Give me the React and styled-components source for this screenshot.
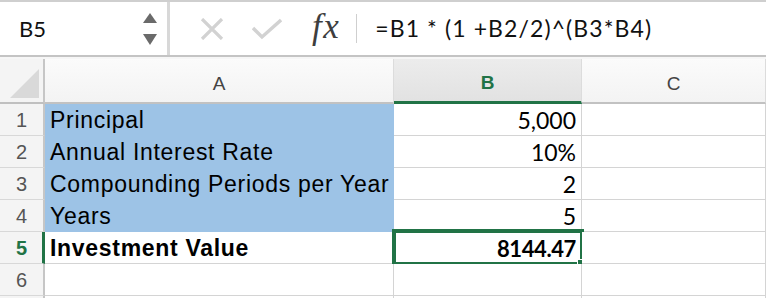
import styled, { createGlobalStyle, css } from 'styled-components';

const GlobalStyle = createGlobalStyle`
  html, body {
    margin: 0;
    padding: 0;
    background: #ffffff;
  }
  body {
    width: 766px;
    height: 298px;
    overflow: hidden;
  }
`;

const green = '#217346';
const gridLine = '#d4d4d4';
const fill = '#9dc3e6';

const Window = styled.div`
  width: 766px;
  height: 298px;
  overflow: hidden;
  background: #fff;
`;

const Toolbar = styled.div`
  display: flex;
  height: 53px;
  border-top: 2px solid #cfcfcf;
  border-bottom: 2px solid #c4c4c4;
  box-shadow: 0 2px 0 #f6f6f6, 0 3px 0 #c9c9c9;
  margin-bottom: 2px;
  background: #fff;
`;

const NameBox = styled.div`
  width: 167px;
  display: flex;
  align-items: center;
  justify-content: space-between;
  padding: 0 10px 0 19px;
  box-sizing: border-box;
  font-family: 'Lato', 'Liberation Sans', sans-serif;
  font-size: 22px;
  color: #111;
`;

const Spinner = styled.div`
  display: flex;
  flex-direction: column;
  gap: 11px;
  margin-top: 1px;
`;

const Arrow = styled.span`
  width: 0;
  height: 0;
  border-left: 7px solid transparent;
  border-right: 7px solid transparent;
  ${({ $down }) =>
    $down
      ? css`border-top: 11px solid #6a6a6a;`
      : css`border-bottom: 10px solid #6a6a6a;`}
`;

const Divider = styled.div`
  width: 3px;
  background: #d8d8d8;
`;

const Tools = styled.div`
  flex: 1;
  display: flex;
  align-items: center;
  padding-left: 27px;
`;

const IconButton = styled.span`
  display: flex;
  align-items: center;
  justify-content: center;
  width: 30px;
  margin-right: ${({ $gap }) => $gap}px;
`;

const Fx = styled.span`
  font-family: 'Liberation Serif', serif;
  font-style: italic;
  font-size: 35px;
  color: #3e3e3e;
  margin-left: 1px;
  margin-right: 16px;
  margin-top: -4px;
  letter-spacing: 1.5px;
`;

const FormulaSep = styled.span`
  width: 1px;
  height: 29px;
  background: #cfcfcf;
  margin-right: 18px;
`;

const Formula = styled.span`
  font-family: 'Lato', 'Liberation Sans', sans-serif;
  font-size: 23px;
  letter-spacing: 1.1px;
  color: #111;
  margin-top: -1px;
`;

const Sheet = styled.div`
  display: grid;
  grid-template-columns: 45px 349px 188px 1fr;
  grid-template-rows: 45px repeat(7, 32px);
`;

const Corner = styled.div`
  background: #f4f4f4;
  border-right: 2px solid #c6c6c6;
  border-bottom: 2px solid #c0c0c0;
  display: flex;
  align-items: flex-end;
  justify-content: flex-end;
  padding: 0 4px 4px 0;
`;

const Triangle = styled.span`
  width: 0;
  height: 0;
  border-left: 29px solid transparent;
  border-bottom: 29px solid #d9d9d9;
`;

const ColHead = styled.div`
  display: flex;
  align-items: center;
  justify-content: center;
  font-family: 'Liberation Sans', Arial, sans-serif;
  font-size: 19px;
  padding-top: 6px;
  border-right: 1px solid #dcdcdc;
  ${({ $active }) =>
    $active
      ? css`
          background: linear-gradient(#ececec, #e2e2e2);
          color: ${green};
          font-weight: bold;
          border-bottom: 3px solid ${green};
        `
      : css`
          background: linear-gradient(#fbfbfb, #f3f3f3);
          color: #444;
          border-bottom: 2px solid #c2c2c2;
        `}
`;

const RowHead = styled.div`
  display: flex;
  align-items: center;
  justify-content: center;
  font-family: 'Liberation Sans', Arial, sans-serif;
  font-size: 20px;
  padding-top: 2px;
  background: #f4f4f4;
  border-bottom: 1px solid #d8d8d8;
  ${({ $active }) =>
    $active
      ? css`
          color: ${green};
          font-weight: bold;
          border-right: 3px solid ${green};
          padding-left: 1px;
        `
      : css`
          color: #555;
          border-right: 2px solid #c6c6c6;
        `}
`;

const Cell = styled.div`
  position: relative;
  display: flex;
  align-items: center;
  padding: 1px 5px 0 5px;
  white-space: nowrap;
  color: #000;
  border-right: 1px solid ${({ $fill }) => ($fill ? fill : gridLine)};
  border-bottom: 1px solid ${({ $fill }) => ($fill ? fill : gridLine)};
  background: ${({ $fill }) => ($fill ? fill : '#fff')};
  font-weight: ${({ $bold }) => ($bold ? 'bold' : 'normal')};
  ${({ $num, $bold }) =>
    $num
      ? css`
          justify-content: flex-end;
          font-family: 'Lato', 'Liberation Sans', sans-serif;
          font-size: ${$bold ? 22 : 23}px;
          letter-spacing: ${$bold ? -0.4 : 0}px;
        `
      : css`
          font-family: 'Liberation Sans', Arial, sans-serif;
          font-size: 23px;
          letter-spacing: 0.7px;
        `}
`;

const Selection = styled.span`
  position: absolute;
  top: -3px;
  left: -2px;
  right: -3px;
  bottom: -3px;
  border: 4px solid ${green};
  pointer-events: none;
`;

const Handle = styled.span`
  position: absolute;
  right: -7px;
  bottom: -7px;
  width: 9px;
  height: 9px;
  background: ${green};
  border-left: 1px solid #fff;
  border-top: 1px solid #fff;
`;

const rows = [
  { label: 'Principal', value: '5,000', fill: true },
  { label: 'Annual Interest Rate', value: '10%', fill: true },
  { label: 'Compounding Periods per Year', value: '2', fill: true },
  { label: 'Years', value: '5', fill: true },
  { label: 'Investment Value', value: '8144.47', bold: true, active: true },
  { label: '', value: '' },
  { label: '', value: '', hidden: true },
];

const CrossIcon = () => (
  <svg width="24" height="22" viewBox="0 0 24 22">
    <path d="M2 1 L22 21 M22 1 L2 21" stroke="#d2d2d2" strokeWidth="3.2" fill="none" />
  </svg>
);

const CheckIcon = () => (
  <svg width="30" height="22" viewBox="0 0 30 22">
    <path d="M1 10 L10 19 L29 2" stroke="#d2d2d2" strokeWidth="3.4" fill="none" />
  </svg>
);

const App = () => (
  <Window>
    <GlobalStyle />
    <Toolbar>
      <NameBox>
        B5
        <Spinner>
          <Arrow />
          <Arrow $down />
        </Spinner>
      </NameBox>
      <Divider />
      <Tools>
        <IconButton $gap={25}>
          <CrossIcon />
        </IconButton>
        <IconButton $gap={29}>
          <CheckIcon />
        </IconButton>
        <Fx>fx</Fx>
        <FormulaSep />
        <Formula>=B1 * (1 +B2/2)^(B3*B4)</Formula>
      </Tools>
    </Toolbar>
    <Sheet>
      <Corner>
        <Triangle />
      </Corner>
      <ColHead>A</ColHead>
      <ColHead $active>B</ColHead>
      <ColHead>C</ColHead>
      {rows.map((row, i) => [
        <RowHead key={`h${i}`} $active={row.active}>
          {row.hidden ? '' : i + 1}
        </RowHead>,
        <Cell key={`a${i}`} $fill={row.fill} $bold={row.bold}>
          {row.label}
        </Cell>,
        <Cell key={`b${i}`} $num $bold={row.bold}>
          {row.value}
          {row.active && (
            <Selection>
              <Handle />
            </Selection>
          )}
        </Cell>,
        <Cell key={`c${i}`} />,
      ])}
    </Sheet>
  </Window>
);

export default App;
